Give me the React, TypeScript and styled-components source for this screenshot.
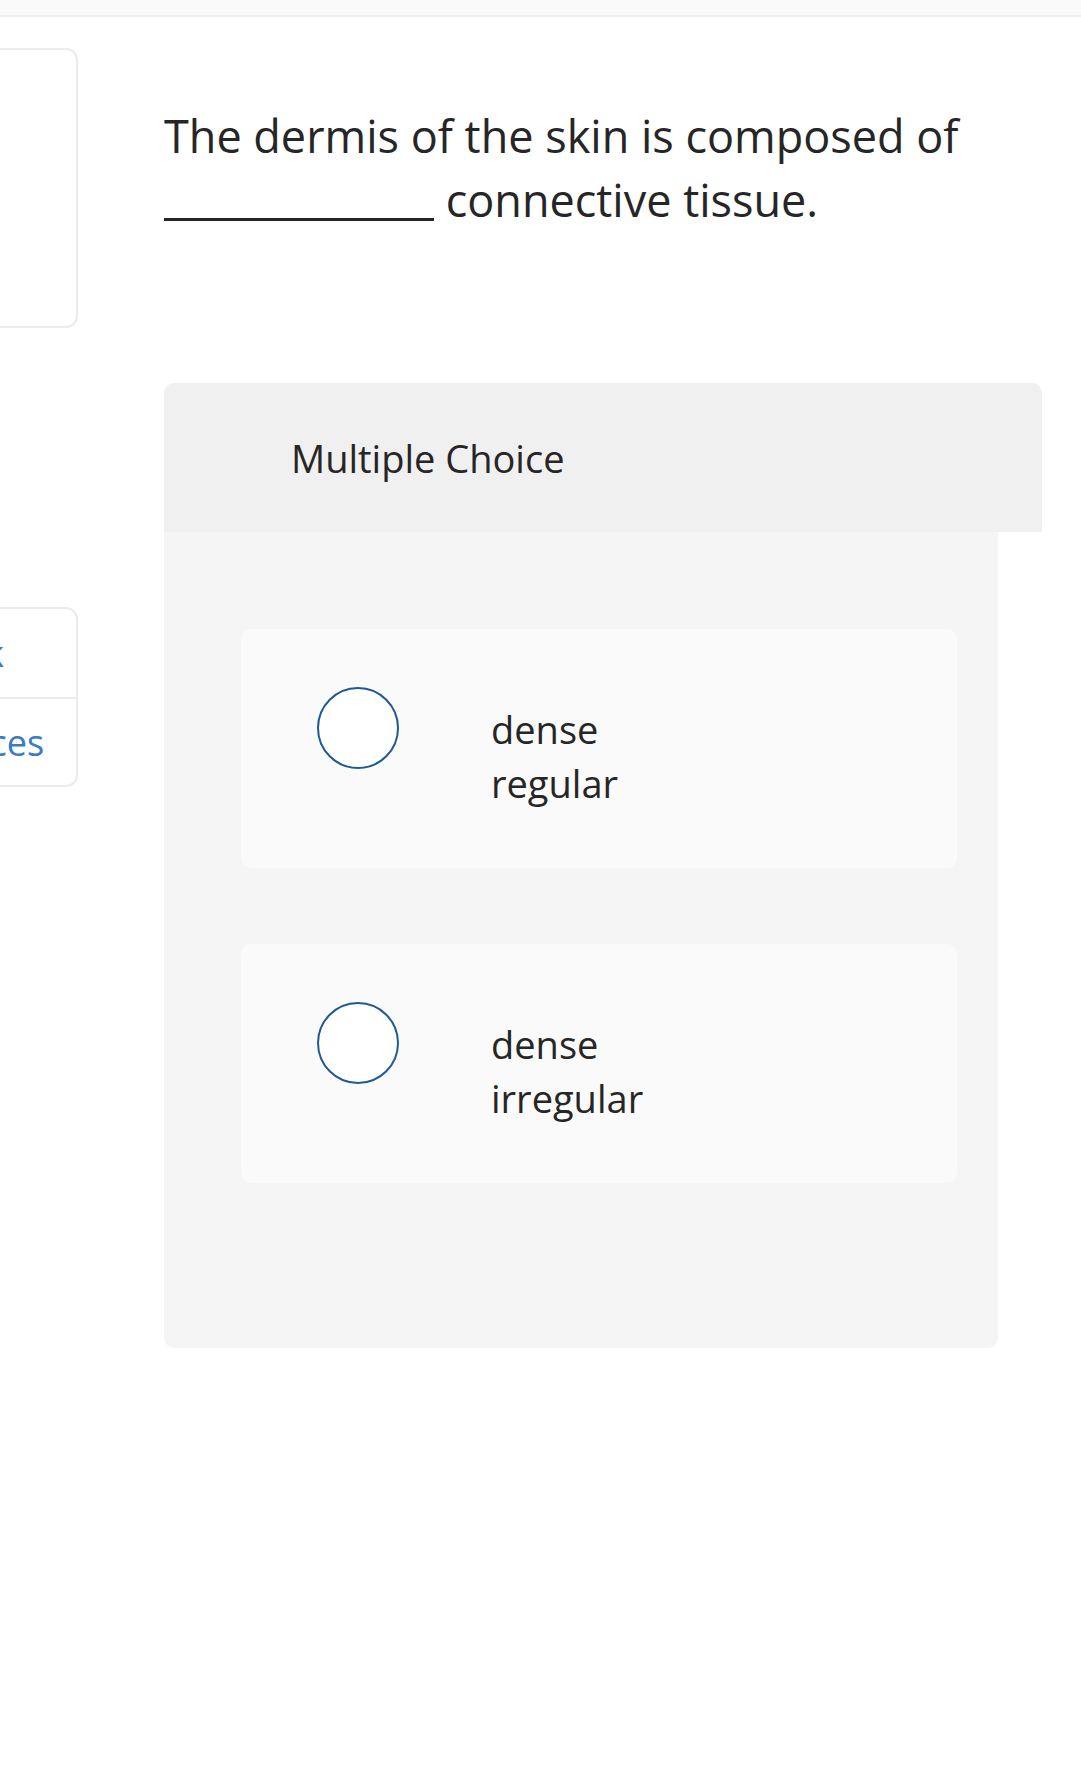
import styled, { createGlobalStyle } from "styled-components";

const options = ["dense regular", "dense irregular"];

function App() {
  return (
    <>
      <GlobalStyle />
      <TopBar />
      <Layout>
        <SideColumn>
          <InfoCard />
          <ToolNav>
            <NavItem>eBook</NavItem>
            <NavItem $divided>References</NavItem>
          </ToolNav>
        </SideColumn>
        <Main>
          <Question>
            The dermis of the skin is composed of <Blank /> connective tissue.
          </Question>
          <Panel>
            <PanelHeader>Multiple Choice</PanelHeader>
            <PanelBody>
              {options.map(opt => (
                <OptionCard key={opt}>
                  <Radio />
                  <OptionLabel>{opt}</OptionLabel>
                </OptionCard>
              ))}
            </PanelBody>
          </Panel>
        </Main>
      </Layout>
    </>
  );
}

const GlobalStyle = createGlobalStyle`
  body {
    margin: 0;
    background: #ffffff;
    font-family: "Open Sans", "Liberation Sans", sans-serif;
    color: #2a2a2a;
    overflow-x: hidden;
  }
`;

const TopBar = styled.div`
  height: 15px;
  background: #fafafa;
  border-bottom: 2px solid #eeeeee;
`;

const Layout = styled.div`
  display: flex;
  gap: 86px;
  padding-top: 31px;
`;

const SideColumn = styled.div`
  display: flex;
  flex-direction: column;
  width: 270px;
  margin-left: -192px;
  flex-shrink: 0;
`;

const InfoCard = styled.div`
  height: 280px;
  box-sizing: border-box;
  border: 2px solid #ebebeb;
  border-radius: 12px;
`;

const ToolNav = styled.div`
  margin-top: 279px;
  border: 2px solid #ebebeb;
  border-radius: 12px;
  display: flex;
  flex-direction: column;
`;

const NavItem = styled.div<{ $divided?: boolean }>`
  height: ${p => (p.$divided ? 86 : 88)}px;
  display: flex;
  align-items: center;
  justify-content: center;
  padding-left: 16px;
  font-size: 36px;
  color: #3b7bc6;
  border-top: ${p => (p.$divided ? "2px solid #ebebeb" : "none")};
`;

const Main = styled.div`
  width: 878px;
  flex-shrink: 0;
`;

const Question = styled.p`
  margin: 56px 0 0;
  font-size: 45px;
  line-height: 63.5px;
  color: #262626;
`;

const Blank = styled.span`
  display: inline-block;
  width: 270px;
  border-bottom: 3px solid #262626;
  margin-bottom: -4px;
`;

const Panel = styled.div`
  margin-top: 152px;
`;

const PanelHeader = styled.div`
  height: 149px;
  background: #f0f0f0;
  border-radius: 10px 10px 0 0;
  padding-left: 127px;
  display: flex;
  align-items: center;
  font-size: 38px;
  color: #262626;
`;

const PanelBody = styled.div`
  width: 834px;
  box-sizing: border-box;
  background: #f5f5f5;
  border-radius: 0 0 10px 10px;
  padding: 97px 41px 165px 77px;
  display: flex;
  flex-direction: column;
  gap: 76px;
`;

const OptionCard = styled.div`
  height: 239px;
  box-sizing: border-box;
  background: #fafafa;
  border-radius: 10px;
  padding: 58px 0 0 76px;
  display: flex;
  align-items: flex-start;
`;

const Radio = styled.div`
  width: 82px;
  height: 82px;
  box-sizing: border-box;
  border: 2.5px solid #1f5a94;
  border-radius: 50%;
  background: #ffffff;
  flex-shrink: 0;
`;

const OptionLabel = styled.div`
  margin: 15px 0 0 92px;
  width: 200px;
  font-size: 38px;
  line-height: 54px;
  color: #262626;
`;

export default App;
